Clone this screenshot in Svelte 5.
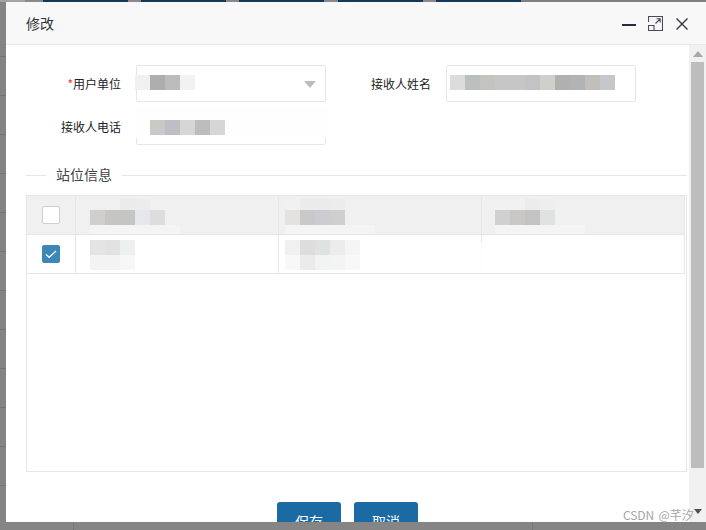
<script>
  const mosaic = {
    unit: ['#f0f0f1', '#b0aeac', '#bcbdbb', '#f1f2f4'],
    phone: ['#c9cac5', '#bfbec4', '#d6d6d6', '#bdbdbe', '#d5d6d8'],
    name: ['#dddcda', '#bcbfbf', '#c4c3c0', '#c6c6c6', '#c6c6c6', '#c2c3c6', '#d0cfcc', '#afb1b0', '#b2b3b5', '#c2bfbb', '#c6c7ca']
  };
  const header = [
    { top: ['#f0f0f0', '#f0f0f0', '#ebebeb', '#ececec', '#f0f0f0'], main: ['#d0cfcd', '#c5c5c4', '#c5c5c4', '#e6e7ea', '#dddddd'] },
    { top: ['#f1f1f1', '#ebebeb', '#ebebeb', '#ececec'], main: ['#e3e2e0', '#c9c9c9', '#ccccd0', '#cfcfcf'] },
    { top: ['#f1f1f1', '#f1f1f1', '#ececec', '#eeeeee'], main: ['#d0d0d0', '#c9c8c6', '#c3c3c3', '#e0e2e2'] }
  ];
  const row = [
    { a: ['#e4e4e4', '#e2e2e2', '#eeefef'], b: ['#f3f3f3', '#f3f3f3', '#f7f7f7'] },
    { a: ['#f0f0f0', '#dddddd', '#e0e1e1', '#ececec', '#f5f5f5'], b: ['#f8f8f8', '#ebebeb', '#f2f3f3', '#f4f4f4', '#f8f8f8'] },
    { a: [], b: [] }
  ];
  const strip = [
    [25, '#a3a3a3'], [18, '#8a8a8a'], [85, '#123a5c'], [13, '#8a8a8a'], [85, '#123a5c'], [13, '#8a8a8a'],
    [85, '#123a5c'], [14, '#8a8a8a'], [85, '#123a5c'], [13, '#8a8a8a'], [85, '#123a5c'], [185, '#808080']
  ];
</script>

{#snippet blocks(colors)}
  <span class="blocks">
    {#each colors as c}<i style="background:{c}"></i>{/each}
  </span>
{/snippet}

<div class="page">
  <div class="strip">
    {#each strip as [w, c]}<i style="width:{w}px;background:{c}"></i>{/each}
  </div>
  <section class="dialog">
    <header class="head">
      <h2>修改</h2>
      <div class="tools">
        <svg width="14" height="14" viewBox="0 0 14 14"><path d="M0 8h14" stroke="#2a2a3a" stroke-width="2" /></svg>
        <svg width="15" height="15" viewBox="0 0 15 15" fill="none" stroke="#4b4b58" stroke-width="1.1"><path d="M.5 6V.5h14v14H6" /><path d="M.5 9.5H6v5H.5zM7.5 7.5 12 3M8.5 2.8H12.2V6.5" /></svg>
        <svg width="14" height="14" viewBox="0 0 14 14" fill="none" stroke="#35353f" stroke-width="1.4"><path d="M1.5 1.5l11 11M12.5 1.5l-11 11" /></svg>
      </div>
    </header>
    <div class="body">
      <div class="content">
        <div class="form">
          <div class="field">
            <span class="label"><b>*</b>用户单位</span>
            <div class="input select">
              {@render blocks(mosaic.unit)}
              <svg class="caret" width="12" height="7" viewBox="0 0 12 7"><path d="M0 0h12L6 7z" fill="#bdbdbd" /></svg>
            </div>
          </div>
          <div class="field">
            <span class="label wide">接收人姓名</span>
            <div class="input name">{@render blocks(mosaic.name)}</div>
          </div>
          <div class="field">
            <span class="label">接收人电话</span>
            <div class="input phone"><div class="patch"></div>{@render blocks(mosaic.phone)}</div>
          </div>
        </div>

        <div class="legend"><span>站位信息</span></div>

        <div class="table">
          <div class="tr th">
            <div class="cell check"><span class="box"></span></div>
            {#each header as h}
              <div class="cell">
                <div class="stack">
                  {@render blocks(h.top)}
                  {@render blocks(h.main)}
                </div>
              </div>
            {/each}
          </div>
          <div class="tr td">
            <div class="cell check">
              <span class="box on">
                <svg width="12" height="10" viewBox="0 0 12 10" fill="none" stroke="#fff" stroke-width="1.3"><path d="M1 5.5l3.2 2.8L11 2" /></svg>
              </span>
            </div>
            {#each row as r}
              <div class="cell">
                <div class="stack rowstack">
                  {@render blocks(r.a)}
                  {@render blocks(r.b)}
                </div>
              </div>
            {/each}
          </div>
        </div>

        <div class="actions">
          <button>保存</button>
          <button>取消</button>
        </div>
      </div>
      <div class="scrollbar">
        <svg width="10" height="6" viewBox="0 0 10 6"><path d="M0 6h10L5 0z" fill="#a8a8a8" /></svg>
        <div class="thumb"></div>
        <svg class="down" width="8" height="5" viewBox="0 0 8 5"><path d="M0 0h8L4 5z" fill="#505050" /></svg>
      </div>
    </div>
    <div class="mark">CSDN @芊汐</div>
  </section>
  <div class="foot"></div>
</div>

<style>
  :global(body) {
    margin: 0;
    overflow: hidden;
    background: #808080;
  }
  .page {
    width: 706px;
    height: 530px;
    overflow: hidden;
    font-family: "Noto Sans CJK SC", "Liberation Sans", sans-serif;
    background: repeating-linear-gradient(180deg, #848484 0 38px, #757575 38px 39px) 0 18px;
  }
  .strip {
    display: flex;
    height: 2px;
  }
  .strip i {
    display: block;
    flex: none;
    height: 2px;
  }
  .dialog {
    position: relative;
    width: 700px;
    height: 520px;
    margin-left: 6px;
    background: #fff;
    overflow: hidden;
    display: flex;
    flex-direction: column;
  }
  .head {
    flex: none;
    height: 42px;
    background: #f8f8f8;
    border-bottom: 1px solid #e9e9e9;
    display: flex;
    align-items: center;
    justify-content: space-between;
    padding: 0 17px 0 20px;
  }
  h2 {
    margin: 0;
    font-size: 14px;
    font-weight: 400;
    color: #333;
    line-height: 42px;
  }
  .tools {
    display: flex;
    align-items: center;
    gap: 12px;
    margin-top: 1px;
  }
  .tools svg {
    display: block;
  }
  .body {
    flex: 1;
    display: flex;
    min-height: 0;
  }
  .content {
    flex: 1;
    min-width: 0;
    padding: 20px 0 0 20px;
  }
  .form {
    display: grid;
    grid-template-columns: 300px 310px;
    row-gap: 6px;
  }
  .field {
    display: flex;
    align-items: center;
    height: 37px;
  }
  .label {
    width: 95px;
    margin-right: 15px;
    text-align: right;
    font-size: 12px;
    color: #222;
    white-space: nowrap;
    margin-top: -1px;
  }
  .label.wide {
    width: 105px;
  }
  .label b {
    color: #e33;
    font-weight: 400;
  }
  .input {
    position: relative;
    box-sizing: border-box;
    width: 190px;
    height: 37px;
    border: 1px solid #e6e6e6;
    border-radius: 2px;
    padding: 9px 0 0 0;
  }
  .name {
    padding-left: 3px;
  }
  .phone {
    padding-left: 13px;
    padding-top: 11px;
  }
  .phone .blocks {
    position: relative;
  }
  .select {
    background: #fff;
  }
  .select .blocks {
    margin-left: -2px;
  }
  .patch {
    position: absolute;
    left: -2px;
    right: -4px;
    top: -3px;
    height: 32px;
    background: #fefefe;
  }
  .caret {
    position: absolute;
    right: 9px;
    top: 15px;
  }
  .blocks {
    display: flex;
    height: 15px;
  }
  .blocks i {
    display: block;
    flex: none;
    width: 15px;
    height: 15px;
  }
  .legend {
    display: flex;
    align-items: center;
    gap: 10px;
    height: 20px;
    margin: 20px 2px 10px 0;
    font-size: 14px;
    line-height: 18px;
    color: #444;
  }
  .legend span {
    margin-top: -2px;
  }
  .legend::before {
    content: "";
    flex: none;
    width: 20px;
    height: 1px;
    background: #e6e6e6;
  }
  .legend::after {
    content: "";
    flex: 1;
    height: 1px;
    background: #e6e6e6;
  }
  .table {
    box-sizing: border-box;
    width: 661px;
    height: 277px;
    border: 1px solid #e6e6e6;
  }
  .tr {
    display: grid;
    grid-template-columns: 49px 203px 203px 1fr;
    border-bottom: 1px solid #e6e6e6;
    margin-right: 1px;
    border-right: 1px solid #e6e6e6;
  }
  .th {
    height: 38px;
    background: #f0f0f0;
  }
  .td {
    height: 38px;
  }
  .cell {
    box-sizing: border-box;
    border-right: 1px solid #e6e6e6;
    padding-left: 14px;
    min-width: 0;
  }
  .cell:last-child {
    border-right: 0;
  }
  .cell:nth-child(3) {
    padding-left: 6px;
  }
  .cell:nth-child(4) {
    padding-left: 13px;
  }
  .td .cell:nth-child(3) {
    border-image: linear-gradient(#e6e6e6 8px, #fdfdfd 8px) 1;
  }
  .check {
    padding-left: 15px;
    display: flex;
    align-items: center;
  }
  .stack {
    padding-top: 3px;
  }
  .th .stack::after {
    content: "";
    display: block;
    width: 90px;
    height: 9px;
    background: #f4f4f4;
  }
  .rowstack {
    padding-top: 5px;
  }
  .th .stack .blocks:first-child {
    height: 11px;
  }
  .box {
    box-sizing: border-box;
    display: flex;
    align-items: center;
    justify-content: center;
    width: 18px;
    height: 18px;
    border: 1px solid #cfcfcf;
    border-radius: 2px;
    background: #fff;
  }
  .box.on {
    background: #3d87b8;
    border-color: #3d87b8;
  }
  .actions {
    display: flex;
    justify-content: center;
    gap: 13px;
    margin-top: 30px;
    padding-right: 20px;
  }
  button {
    width: 64px;
    height: 38px;
    padding: 0;
    border: 0;
    border-radius: 3px;
    background: #1c6aa3;
    color: #fff;
    font: 14px "Noto Sans CJK SC", sans-serif;
  }
  .scrollbar {
    position: relative;
    flex: none;
    width: 17px;
    background: #f1f1f1;
    display: flex;
    flex-direction: column;
    align-items: center;
  }
  .scrollbar svg {
    display: block;
    margin-top: 6px;
  }
  .thumb {
    width: 13px;
    height: 406px;
    margin: 5px 2px 0 2px;
    background: #bdbdbd;
  }
  .scrollbar .down {
    margin-top: 41px;
  }
  .mark {
    position: absolute;
    left: 617px;
    top: 504px;
    font-size: 12px;
    line-height: 18px;
    word-spacing: 2px;
    letter-spacing: -0.1px;
    color: #a6a6a6;
    white-space: nowrap;
  }
  .foot {
    height: 8px;
    background: linear-gradient(90deg, transparent 73px, #777 73px 74px, transparent 74px 532px, #777 532px 533px, transparent 533px) #858585;
  }
</style>
